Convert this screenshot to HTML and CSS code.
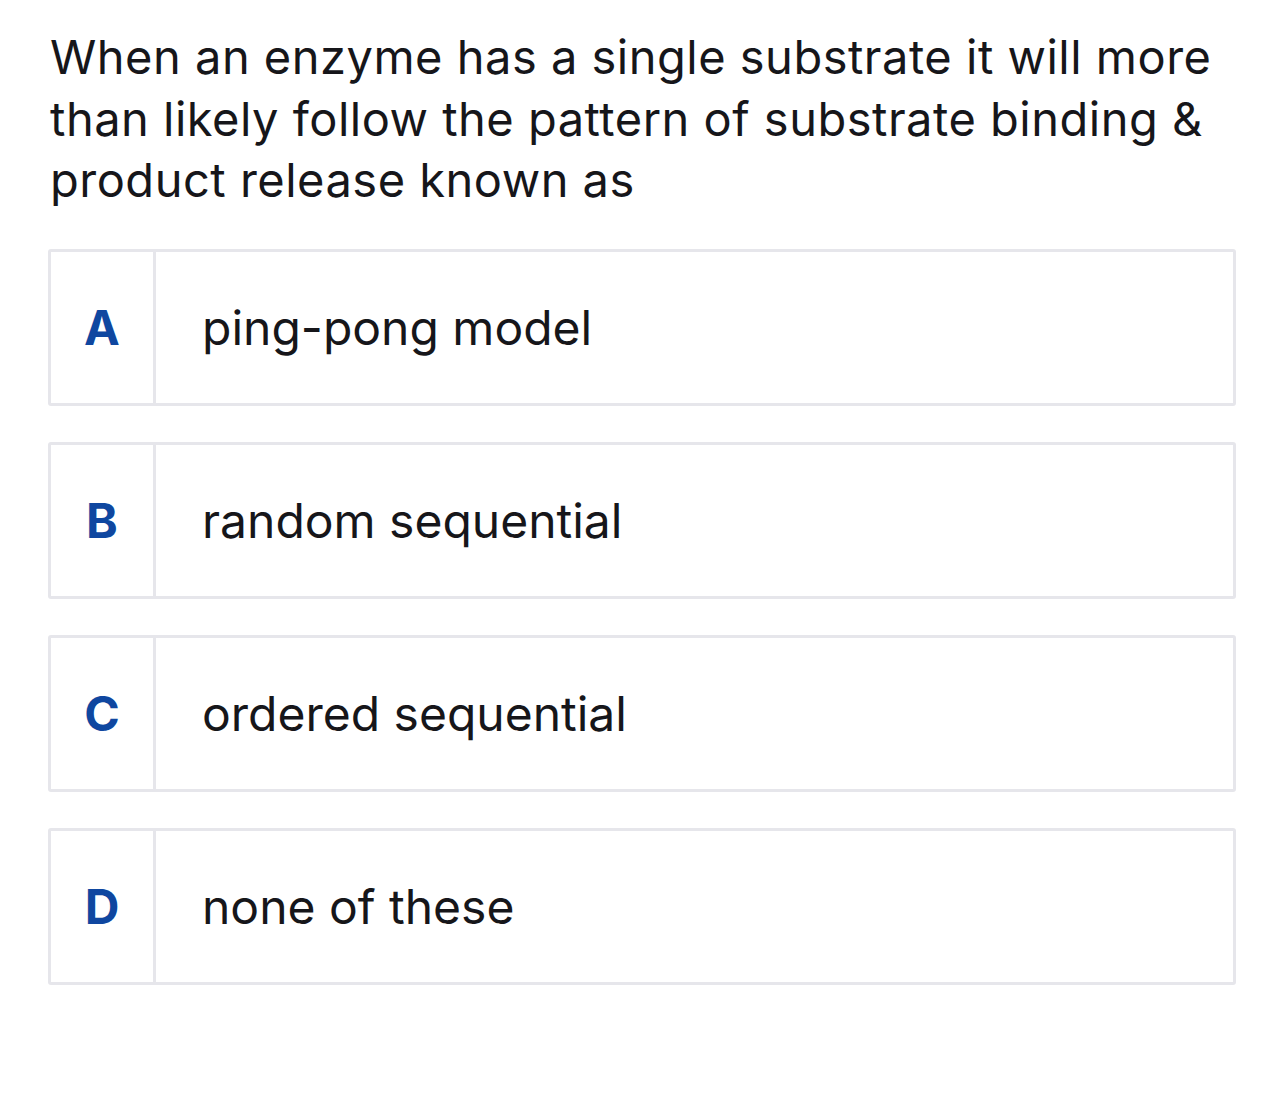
FILE: index.html
```html
<!DOCTYPE html>
<html>
<head>
<meta charset="utf-8">
<link rel="stylesheet" href="styles.css">
</head>
<body>
<div class="page">
  <p class="question">When an enzyme has a single substrate it will more than likely follow the pattern of substrate binding &amp; product release known as</p>
  <div class="options">
    <div class="option"><div class="letter">A</div><div class="text">ping-pong model</div></div>
    <div class="option"><div class="letter">B</div><div class="text">random sequential</div></div>
    <div class="option"><div class="letter">C</div><div class="text">ordered sequential</div></div>
    <div class="option"><div class="letter">D</div><div class="text">none of these</div></div>
  </div>
</div>
</body>
</html>
```
FILE: styles.css
```css
html, body {
  margin: 0;
  padding: 0;
  background: #ffffff;
}
.page {
  padding: 26px 48px 0 48px;
  font-family: Inter, "Noto Sans", sans-serif;
  color: #16161a;
}
.question {
  margin: 0;
  font-size: 47px;
  line-height: 61.5px;
  letter-spacing: 0.5px;
  padding-left: 2px;
}
.options {
  margin-top: 38px;
  display: flex;
  flex-direction: column;
  gap: 36px;
  width: 1188px;
}
.option {
  display: flex;
  height: 151px;
  border: 3px solid #e6e6eb;
  border-radius: 3px;
}
.letter {
  width: 102px;
  border-right: 3px solid #e6e6eb;
  display: flex;
  align-items: center;
  justify-content: center;
  font-size: 48px;
  font-weight: 700;
  color: #0f47a0;
}
.text {
  display: flex;
  align-items: center;
  padding-left: 46px;
  font-size: 48px;
  letter-spacing: 0;
}
```
